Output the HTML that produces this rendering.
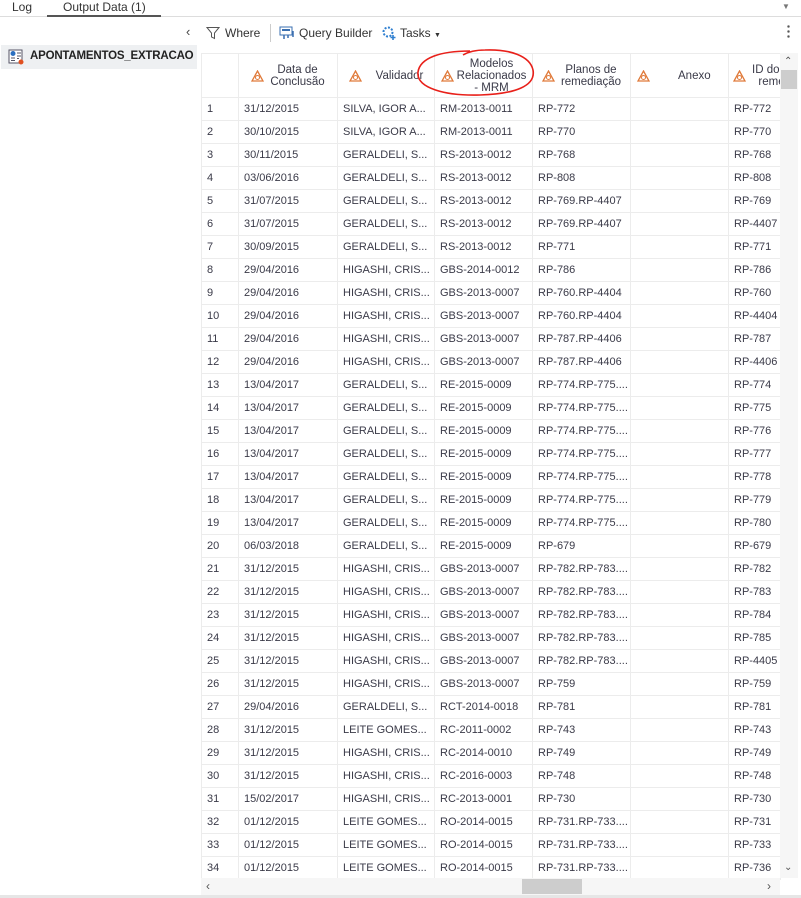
<!DOCTYPE html>
<html><head><meta charset="utf-8"><style>
*{margin:0;padding:0;box-sizing:border-box}
body{width:801px;height:898px;background:#fff;font-family:"Liberation Sans",Arial,sans-serif;font-size:11px;color:#3a3a48;position:relative;overflow:hidden}
.abs{position:absolute}
table{position:absolute;left:201px;top:53px;border-collapse:collapse;table-layout:fixed;width:579px}
td,th{border:1px solid #ececec;height:23px;white-space:nowrap;overflow:hidden;padding:0 0 0 5px;font-weight:normal;text-align:left}
th{height:44px;text-align:center;line-height:12px;padding:0;font-size:11.5px}
.ic{display:inline-block;vertical-align:middle;flex-shrink:0}
.hc{display:flex;align-items:center;justify-content:center;gap:6px;padding:0 4px}
.hc span{text-align:center}
</style></head><body>
<div class="abs" style="left:12px;top:0;font-size:12px;color:#333">Log</div>
<div class="abs" style="left:63px;top:0;font-size:12px;color:#333">Output Data (1)</div>
<div class="abs" style="left:0;top:16px;width:801px;height:1px;background:#ddd"></div>
<div class="abs" style="left:47px;top:15px;width:114px;height:2px;background:#555"></div>
<div class="abs" style="left:782px;top:2px;font-size:8px;color:#777">▼</div>
<div class="abs" style="left:186px;top:24px;font-size:13px;color:#444">&#8249;</div>
<svg class="abs" style="left:206px;top:26px" width="14" height="14" viewBox="0 0 14 14"><path d="M1 1.5H13L8.5 7V12.5L5.5 11V7Z" fill="none" stroke="#555" stroke-width="1"/></svg>
<div class="abs" style="left:225px;top:26px;color:#333;font-size:12px">Where</div>
<div class="abs" style="left:270px;top:24px;width:1px;height:18px;background:#ccc"></div>
<svg class="abs" style="left:279px;top:26px" width="16" height="14" viewBox="0 0 16 14"><rect x="1" y="1" width="12" height="8" fill="none" stroke="#3a6fb0"/><rect x="3" y="3" width="8" height="2" fill="#3a6fb0"/><path d="M5 9v4M9 9v3M14 5v6" stroke="#3a6fb0" stroke-width="1.5"/></svg>
<div class="abs" style="left:299px;top:26px;color:#333;font-size:12px">Query Builder</div>
<svg class="abs" style="left:381px;top:25px" width="16" height="16" viewBox="0 0 16 16"><circle cx="7" cy="7" r="4.5" fill="none" stroke="#2f7fd0" stroke-width="2" stroke-dasharray="2 1.5"/><path d="M12 10v5M9.5 12.5h5" stroke="#2f7fd0" stroke-width="1.6"/></svg>
<div class="abs" style="left:400px;top:26px;color:#333;font-size:12px">Tasks <span style="font-size:7px">▼</span></div>
<div class="abs" style="left:787px;top:24px;width:3px;height:14px;background:radial-gradient(circle,#555 1.2px,transparent 1.3px) 0 0/3px 5px"></div>
<div class="abs" style="left:1px;top:45px;width:196px;height:24px;background:#eef0f2"></div>
<svg class="abs" style="left:8px;top:49px" width="16" height="16" viewBox="0 0 16 16"><rect x="1" y="1" width="13" height="13" fill="#fff" stroke="#556"/><circle cx="5" cy="4.5" r="2.5" fill="#2a6fc0"/><path d="M3 9h4M3 11.5h4M9 4h4M9 7h4M9 9.5h2" stroke="#556"/><circle cx="13" cy="13" r="2.5" fill="#e05020"/></svg>
<div class="abs" style="left:30px;top:50px;font-weight:bold;color:#222;font-size:11.5px;letter-spacing:-0.2px">APONTAMENTOS_EXTRACAO</div>
<table>
<colgroup><col style="width:37px"><col style="width:99px"><col style="width:97px"><col style="width:98px"><col style="width:98px"><col style="width:98px"><col style="width:52px"></colgroup>
<tr><th></th>
<th><div class="hc"><svg class="ic" width="13" height="12" viewBox="0 0 13 12"><path d="M6.5 1L12 11H1Z" fill="none" stroke="#e07a3a" stroke-width="1.3"/><circle cx="6.5" cy="7.5" r="2" fill="none" stroke="#e07a3a"/></svg><span>Data de<br>Conclusão</span></div></th>
<th><div class="hc"><svg class="ic" width="13" height="12" viewBox="0 0 13 12"><path d="M6.5 1L12 11H1Z" fill="none" stroke="#e07a3a" stroke-width="1.3"/><circle cx="6.5" cy="7.5" r="2" fill="none" stroke="#e07a3a"/></svg><span style="margin-left:8px">Validador</span></div></th>
<th><div class="hc" style="gap:3px;padding:0 2px"><svg class="ic" width="13" height="12" viewBox="0 0 13 12"><path d="M6.5 1L12 11H1Z" fill="none" stroke="#e07a3a" stroke-width="1.3"/><circle cx="6.5" cy="7.5" r="2" fill="none" stroke="#e07a3a"/></svg><span>Modelos<br>Relacionados<br>- MRM</span></div></th>
<th><div class="hc"><svg class="ic" width="13" height="12" viewBox="0 0 13 12"><path d="M6.5 1L12 11H1Z" fill="none" stroke="#e07a3a" stroke-width="1.3"/><circle cx="6.5" cy="7.5" r="2" fill="none" stroke="#e07a3a"/></svg><span>Planos de<br>remediação</span></div></th>
<th><div class="hc" style="justify-content:flex-start;padding-left:6px"><svg class="ic" width="13" height="12" viewBox="0 0 13 12"><path d="M6.5 1L12 11H1Z" fill="none" stroke="#e07a3a" stroke-width="1.3"/><circle cx="6.5" cy="7.5" r="2" fill="none" stroke="#e07a3a"/></svg><span style="margin-left:22px">Anexo</span></div></th>
<th><div class="hc" style="justify-content:flex-start;padding-left:4px"><svg class="ic" width="13" height="12" viewBox="0 0 13 12"><path d="M6.5 1L12 11H1Z" fill="none" stroke="#e07a3a" stroke-width="1.3"/><circle cx="6.5" cy="7.5" r="2" fill="none" stroke="#e07a3a"/></svg><span style="text-align:left">ID do p<br>&nbsp;&nbsp;reme</span></div></th></tr>
<tr><td>1</td><td>31/12/2015</td><td>SILVA, IGOR A...</td><td>RM-2013-0011</td><td>RP-772</td><td></td><td>RP-772</td></tr>
<tr><td>2</td><td>30/10/2015</td><td>SILVA, IGOR A...</td><td>RM-2013-0011</td><td>RP-770</td><td></td><td>RP-770</td></tr>
<tr><td>3</td><td>30/11/2015</td><td>GERALDELI, S...</td><td>RS-2013-0012</td><td>RP-768</td><td></td><td>RP-768</td></tr>
<tr><td>4</td><td>03/06/2016</td><td>GERALDELI, S...</td><td>RS-2013-0012</td><td>RP-808</td><td></td><td>RP-808</td></tr>
<tr><td>5</td><td>31/07/2015</td><td>GERALDELI, S...</td><td>RS-2013-0012</td><td>RP-769.RP-4407</td><td></td><td>RP-769</td></tr>
<tr><td>6</td><td>31/07/2015</td><td>GERALDELI, S...</td><td>RS-2013-0012</td><td>RP-769.RP-4407</td><td></td><td>RP-4407</td></tr>
<tr><td>7</td><td>30/09/2015</td><td>GERALDELI, S...</td><td>RS-2013-0012</td><td>RP-771</td><td></td><td>RP-771</td></tr>
<tr><td>8</td><td>29/04/2016</td><td>HIGASHI, CRIS...</td><td>GBS-2014-0012</td><td>RP-786</td><td></td><td>RP-786</td></tr>
<tr><td>9</td><td>29/04/2016</td><td>HIGASHI, CRIS...</td><td>GBS-2013-0007</td><td>RP-760.RP-4404</td><td></td><td>RP-760</td></tr>
<tr><td>10</td><td>29/04/2016</td><td>HIGASHI, CRIS...</td><td>GBS-2013-0007</td><td>RP-760.RP-4404</td><td></td><td>RP-4404</td></tr>
<tr><td>11</td><td>29/04/2016</td><td>HIGASHI, CRIS...</td><td>GBS-2013-0007</td><td>RP-787.RP-4406</td><td></td><td>RP-787</td></tr>
<tr><td>12</td><td>29/04/2016</td><td>HIGASHI, CRIS...</td><td>GBS-2013-0007</td><td>RP-787.RP-4406</td><td></td><td>RP-4406</td></tr>
<tr><td>13</td><td>13/04/2017</td><td>GERALDELI, S...</td><td>RE-2015-0009</td><td>RP-774.RP-775....</td><td></td><td>RP-774</td></tr>
<tr><td>14</td><td>13/04/2017</td><td>GERALDELI, S...</td><td>RE-2015-0009</td><td>RP-774.RP-775....</td><td></td><td>RP-775</td></tr>
<tr><td>15</td><td>13/04/2017</td><td>GERALDELI, S...</td><td>RE-2015-0009</td><td>RP-774.RP-775....</td><td></td><td>RP-776</td></tr>
<tr><td>16</td><td>13/04/2017</td><td>GERALDELI, S...</td><td>RE-2015-0009</td><td>RP-774.RP-775....</td><td></td><td>RP-777</td></tr>
<tr><td>17</td><td>13/04/2017</td><td>GERALDELI, S...</td><td>RE-2015-0009</td><td>RP-774.RP-775....</td><td></td><td>RP-778</td></tr>
<tr><td>18</td><td>13/04/2017</td><td>GERALDELI, S...</td><td>RE-2015-0009</td><td>RP-774.RP-775....</td><td></td><td>RP-779</td></tr>
<tr><td>19</td><td>13/04/2017</td><td>GERALDELI, S...</td><td>RE-2015-0009</td><td>RP-774.RP-775....</td><td></td><td>RP-780</td></tr>
<tr><td>20</td><td>06/03/2018</td><td>GERALDELI, S...</td><td>RE-2015-0009</td><td>RP-679</td><td></td><td>RP-679</td></tr>
<tr><td>21</td><td>31/12/2015</td><td>HIGASHI, CRIS...</td><td>GBS-2013-0007</td><td>RP-782.RP-783....</td><td></td><td>RP-782</td></tr>
<tr><td>22</td><td>31/12/2015</td><td>HIGASHI, CRIS...</td><td>GBS-2013-0007</td><td>RP-782.RP-783....</td><td></td><td>RP-783</td></tr>
<tr><td>23</td><td>31/12/2015</td><td>HIGASHI, CRIS...</td><td>GBS-2013-0007</td><td>RP-782.RP-783....</td><td></td><td>RP-784</td></tr>
<tr><td>24</td><td>31/12/2015</td><td>HIGASHI, CRIS...</td><td>GBS-2013-0007</td><td>RP-782.RP-783....</td><td></td><td>RP-785</td></tr>
<tr><td>25</td><td>31/12/2015</td><td>HIGASHI, CRIS...</td><td>GBS-2013-0007</td><td>RP-782.RP-783....</td><td></td><td>RP-4405</td></tr>
<tr><td>26</td><td>31/12/2015</td><td>HIGASHI, CRIS...</td><td>GBS-2013-0007</td><td>RP-759</td><td></td><td>RP-759</td></tr>
<tr><td>27</td><td>29/04/2016</td><td>GERALDELI, S...</td><td>RCT-2014-0018</td><td>RP-781</td><td></td><td>RP-781</td></tr>
<tr><td>28</td><td>31/12/2015</td><td>LEITE GOMES...</td><td>RC-2011-0002</td><td>RP-743</td><td></td><td>RP-743</td></tr>
<tr><td>29</td><td>31/12/2015</td><td>HIGASHI, CRIS...</td><td>RC-2014-0010</td><td>RP-749</td><td></td><td>RP-749</td></tr>
<tr><td>30</td><td>31/12/2015</td><td>HIGASHI, CRIS...</td><td>RC-2016-0003</td><td>RP-748</td><td></td><td>RP-748</td></tr>
<tr><td>31</td><td>15/02/2017</td><td>HIGASHI, CRIS...</td><td>RC-2013-0001</td><td>RP-730</td><td></td><td>RP-730</td></tr>
<tr><td>32</td><td>01/12/2015</td><td>LEITE GOMES...</td><td>RO-2014-0015</td><td>RP-731.RP-733....</td><td></td><td>RP-731</td></tr>
<tr><td>33</td><td>01/12/2015</td><td>LEITE GOMES...</td><td>RO-2014-0015</td><td>RP-731.RP-733....</td><td></td><td>RP-733</td></tr>
<tr><td>34</td><td>01/12/2015</td><td>LEITE GOMES...</td><td>RO-2014-0015</td><td>RP-731.RP-733....</td><td></td><td>RP-736</td></tr>
</table>
<svg class="abs" style="left:410px;top:46px" width="130" height="54" viewBox="0 0 130 54"><path d="M60 5C30 5 10 12 8 26C6 42 35 50 70 49C105 48 126 40 123 24C120 10 100 3 75 4C65 4 58 6 53 9" fill="none" stroke="#e8201a" stroke-width="1.6"/></svg>
<div class="abs" style="left:780px;top:53px;width:18px;height:825px;background:#f6f6f6"></div>
<div class="abs" style="left:781px;top:70px;width:16px;height:19px;background:#cdcdcd"></div>
<div class="abs" style="left:784px;top:56px;font-size:10px;color:#555">&#8963;</div>
<div class="abs" style="left:784px;top:862px;font-size:10px;color:#555">&#8964;</div>
<div class="abs" style="left:201px;top:878px;width:579px;height:17px;background:#f6f6f6"></div>
<div class="abs" style="left:522px;top:879px;width:60px;height:15px;background:#cdcdcd"></div>
<div class="abs" style="left:206px;top:879px;font-size:12px;color:#555">&#8249;</div>
<div class="abs" style="left:767px;top:879px;font-size:12px;color:#555">&#8250;</div>
<div class="abs" style="left:0;top:895px;width:801px;height:3px;background:#e6e6e6"></div>
</body></html>
